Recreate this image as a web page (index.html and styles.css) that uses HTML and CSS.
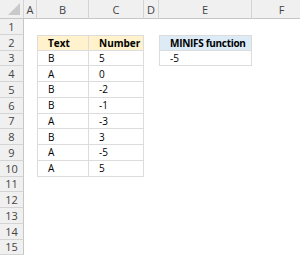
FILE: index.html
```html
<!DOCTYPE html>
<html lang="en">
<head>
    <meta charset="UTF-8">
    <title>MINIFS function</title>
    <link rel="stylesheet" href="styles.css">
</head>
<body>
    <div class="sheet">
        <!-- column headers -->
        <div class="corner"><span class="tri"></span></div>
        <div class="colhead">A</div>
        <div class="colhead">B</div>
        <div class="colhead">C</div>
        <div class="colhead">D</div>
        <div class="colhead">E</div>
        <div class="colhead">F</div>

        <div class="rowhead">1</div>
        <div></div><div></div><div></div><div></div><div></div><div></div>

        <div class="rowhead">2</div>
        <div></div>
        <div class="cell head-y top left">Text</div>
        <div class="cell head-y top">Number</div>
        <div></div>
        <div class="cell head-b top left">MINIFS function</div>
        <div></div>

        <div class="rowhead">3</div>
        <div></div>
        <div class="cell left">B</div>
        <div class="cell">5</div>
        <div></div>
        <div class="cell left">-5</div>
        <div></div>

        <div class="rowhead">4</div>
        <div></div>
        <div class="cell left">A</div>
        <div class="cell">0</div>
        <div></div><div></div><div></div>

        <div class="rowhead">5</div>
        <div></div>
        <div class="cell left">B</div>
        <div class="cell">-2</div>
        <div></div><div></div><div></div>

        <div class="rowhead">6</div>
        <div></div>
        <div class="cell left">B</div>
        <div class="cell">-1</div>
        <div></div><div></div><div></div>

        <div class="rowhead">7</div>
        <div></div>
        <div class="cell left">A</div>
        <div class="cell">-3</div>
        <div></div><div></div><div></div>

        <div class="rowhead">8</div>
        <div></div>
        <div class="cell left">B</div>
        <div class="cell">3</div>
        <div></div><div></div><div></div>

        <div class="rowhead">9</div>
        <div></div>
        <div class="cell left">A</div>
        <div class="cell">-5</div>
        <div></div><div></div><div></div>

        <div class="rowhead">10</div>
        <div></div>
        <div class="cell left">A</div>
        <div class="cell">5</div>
        <div></div><div></div><div></div>

        <div class="rowhead">11</div>
        <div></div><div></div><div></div><div></div><div></div><div></div>
        <div class="rowhead">12</div>
        <div></div><div></div><div></div><div></div><div></div><div></div>
        <div class="rowhead">13</div>
        <div></div><div></div><div></div><div></div><div></div><div></div>
        <div class="rowhead">14</div>
        <div></div><div></div><div></div><div></div><div></div><div></div>
        <div class="rowhead">15</div>
        <div></div><div></div><div></div><div></div><div></div><div></div>
    </div>
</body>
</html>
```

FILE: styles.css
```css
body {
    margin: 0;
    padding: 0;
    background: #fff;
    font-family: 'Open Sans', 'Noto Sans', sans-serif;
    font-size: 10px;
    color: #000;
    overflow: hidden;
}
.sheet {
    display: grid;
    grid-template-columns: 24px 13px 52px 55px 15px 93px 60px;
    grid-template-rows: 19px repeat(15, 15.75px);
    width: 312px;
}
.sheet > div {
    box-sizing: border-box;
}
.corner {
    background-color: #f0f0f0;
    border-right: 1px solid #d4d4d4;
    border-bottom: 1px solid #c6c6c6;
    position: relative;
}
.corner .tri {
    position: absolute;
    right: 3px;
    bottom: 3px;
    width: 0;
    height: 0;
    border-left: 12px solid transparent;
    border-bottom: 12px solid #c9c9c9;
}
.colhead {
    background-color: #f0f0f0;
    border-right: 1px solid #d4d4d4;
    border-bottom: 1px solid #c6c6c6;
    color: #444;
    font-size: 11px;
    display: flex;
    align-items: center;
    justify-content: center;
}
.rowhead {
    background-color: #f0f0f0;
    border-right: 1px solid #c6c6c6;
    border-bottom: 1px solid #d4d4d4;
    color: #444;
    font-size: 11px;
    display: flex;
    align-items: center;
    justify-content: center;
}
.cell {
    border-right: 1px solid #dcdcdc;
    border-bottom: 1px solid #dcdcdc;
    padding-left: 10px;
    display: flex;
    align-items: center;
    white-space: nowrap;
}
.cell.top {
    border-top: 1px solid #dcdcdc;
}
.cell.left {
    border-left: 1px solid #dcdcdc;
}
.head-y {
    background-color: #fff2cc;
    font-weight: bold;
}
.head-b {
    background-color: #ddebf7;
    font-weight: bold;
    letter-spacing: -0.3px;
}
```
